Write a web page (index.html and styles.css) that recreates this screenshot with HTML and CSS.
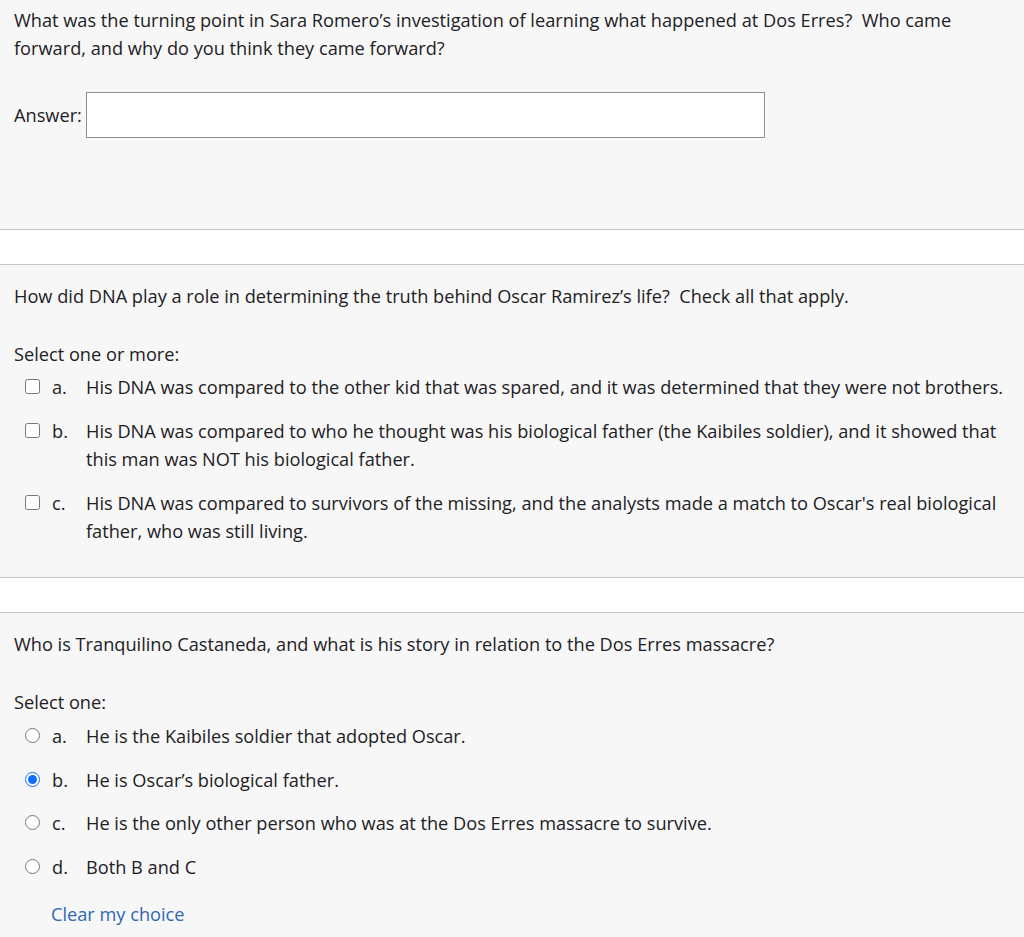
FILE: index.html
```html
<!DOCTYPE html>
<html lang="en">
<head>
    <meta charset="UTF-8">
    <title>Quiz</title>
    <link rel="stylesheet" href="styles.css">
</head>
<body>
    <div class="que first">
        <p class="qtext">What was the turning point in Sara Romero’s investigation of learning what happened at Dos Erres?&nbsp; Who came forward, and why do you think they came forward?</p>
        <div class="answer-row">
            <label for="answer1">Answer:</label>
            <input type="text" id="answer1" class="answer-input">
        </div>
    </div>

    <div class="que">
        <p class="qtext">How did DNA play a role in determining the truth behind Oscar Ramirez’s life?&nbsp; Check all that apply.</p>
        <p class="prompt">Select one or more:</p>
        <div class="options">
            <div class="option">
                <input type="checkbox" id="q2a">
                <span class="letter">a.</span>
                <label for="q2a">His DNA was compared to the other kid that was spared, and it was determined that they were not brothers.</label>
            </div>
            <div class="option">
                <input type="checkbox" id="q2b">
                <span class="letter">b.</span>
                <label for="q2b">His DNA was compared to who he thought was his biological father (the Kaibiles soldier), and it showed that this man was NOT his biological father.</label>
            </div>
            <div class="option">
                <input type="checkbox" id="q2c">
                <span class="letter">c.</span>
                <label for="q2c">His DNA was compared to survivors of the missing, and the analysts made a match to Oscar's real biological father, who was still living.</label>
            </div>
        </div>
    </div>

    <div class="que last">
        <p class="qtext">Who is Tranquilino Castaneda, and what is his story in relation to the Dos Erres massacre?</p>
        <p class="prompt">Select one:</p>
        <div class="options radios">
            <div class="option">
                <input type="radio" name="q3" id="q3a">
                <span class="letter">a.</span>
                <label for="q3a">He is the Kaibiles soldier that adopted Oscar.</label>
            </div>
            <div class="option">
                <input type="radio" name="q3" id="q3b" checked>
                <span class="letter">b.</span>
                <label for="q3b">He is Oscar’s biological father.</label>
            </div>
            <div class="option">
                <input type="radio" name="q3" id="q3c">
                <span class="letter">c.</span>
                <label for="q3c">He is the only other person who was at the Dos Erres massacre to survive.</label>
            </div>
            <div class="option">
                <input type="radio" name="q3" id="q3d">
                <span class="letter">d.</span>
                <label for="q3d">Both B and C</label>
            </div>
        </div>
        <a href="#" class="clear-choice">Clear my choice</a>
    </div>
</body>
</html>
```

FILE: styles.css
```css
* {
    margin: 0;
    padding: 0;
    box-sizing: border-box;
}

body {
    font-family: 'Open Sans', 'Noto Sans', sans-serif;
    font-size: 18.2px;
    line-height: 28px;
    color: #1d2125;
    background-color: #ffffff;
}

.que {
    background-color: #f7f7f7;
    border-top: 1px solid #c6c6c6;
    border-bottom: 1px solid #c6c6c6;
    padding: 17px 8px 32px 14px;
    margin-bottom: 34px;
}

.que.first {
    border-top: none;
    padding-top: 6px;
    height: 230px;
}

.que.first .qtext {
    max-width: 960px;
}

.que.last {
    margin-bottom: 0;
    border-bottom: none;
    min-height: 330px;
}

.answer-row {
    display: flex;
    align-items: center;
    gap: 4px;
    margin-top: 30px;
}

.answer-input {
    width: 679px;
    height: 46px;
    border: 1px solid #8f8f8f;
    background-color: #ffffff;
    font: inherit;
}

.prompt {
    margin-top: 30px;
}

.options {
    display: flex;
    flex-direction: column;
    gap: 16px;
    margin-top: 5px;
    padding-left: 11px;
}

.radios {
    gap: 15.5px;
    margin-top: 6px;
}

.option {
    display: flex;
    align-items: flex-start;
}

.option input {
    width: 15px;
    height: 15px;
    margin: 6px 0 0 0;
    flex-shrink: 0;
    accent-color: #0f6cff;
}

.letter {
    width: 34px;
    padding-left: 12px;
    flex-shrink: 0;
    box-sizing: content-box;
}

.clear-choice {
    display: inline-block;
    margin-top: 19px;
    margin-left: 37px;
    color: #2f68b3;
    text-decoration: none;
}
```
